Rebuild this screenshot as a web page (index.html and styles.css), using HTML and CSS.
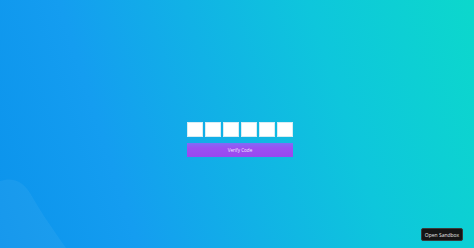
FILE: index.html
```html
<!DOCTYPE html>
<html lang="en">
<head>
<meta charset="utf-8">
<title>Verify Code</title>
<link rel="stylesheet" href="styles.css">
</head>
<body>
<svg class="blob" width="80" height="70" viewBox="0 178 80 70" aria-hidden="true">
  <path d="M0,181 C12,177 24,180 33,198 C42,214 55,232 66,248 L0,248 Z" fill="#ffffff" fill-opacity="0.05"/>
</svg>
<main class="page">
  <form class="verify">
    <div class="digits">
      <input class="digit" type="text" maxlength="1">
      <input class="digit" type="text" maxlength="1">
      <input class="digit" type="text" maxlength="1">
      <input class="digit" type="text" maxlength="1">
      <input class="digit" type="text" maxlength="1">
      <input class="digit" type="text" maxlength="1">
    </div>
    <button class="submit" type="button">Verify Code</button>
  </form>
</main>
<a class="sandbox" href="#">Open Sandbox</a>
</body>
</html>
```

FILE: styles.css
```css
html, body {
  margin: 0;
  padding: 0;
  height: 100%;
}
body {
  font-family: "Open Sans", "Liberation Sans", sans-serif;
  background: linear-gradient(72deg, #0b93ec 0%, #149df0 25%, #0ec6dc 70%, #0cd8cc 100%);
  overflow: hidden;
  position: relative;
}
.blob {
  position: absolute;
  left: 0;
  bottom: 0;
}
.page {
  box-sizing: border-box;
  height: 248px;
  display: flex;
  align-items: center;
  justify-content: center;
  padding-top: 31px;
  padding-left: 6px;
}
.verify {
  display: flex;
  flex-direction: column;
  width: 106px;
  gap: 6px;
}
.digits {
  display: flex;
  gap: 2px;
}
.digit {
  box-sizing: border-box;
  width: 16px;
  height: 15px;
  margin: 0;
  padding: 0;
  border: 1px solid #d8ecf3;
  background: #ffffff;
  outline: none;
}
.submit {
  height: 14px;
  margin: 0;
  padding: 0;
  border: 0;
  background: linear-gradient(180deg, #7f6cf6 0%, #9b4ff2 35%, #9a47ef 100%);
  color: #f3eaff;
  font-family: "Open Sans", "Liberation Sans", sans-serif;
  font-size: 4.6px;
  line-height: 14px;
}
.sandbox {
  position: absolute;
  right: 11px;
  bottom: 7px;
  box-sizing: border-box;
  width: 42px;
  height: 13px;
  display: flex;
  align-items: center;
  justify-content: center;
  background: #151515;
  border: 1px solid #3a3a3a;
  border-radius: 2px;
  color: #e6e6e6;
  font-size: 5px;
  text-decoration: none;
}
```
